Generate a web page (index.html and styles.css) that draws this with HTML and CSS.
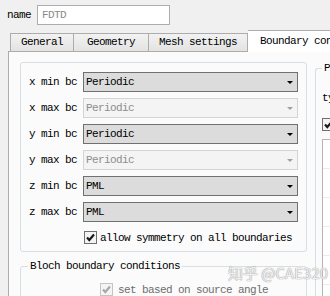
FILE: index.html
```html
<!DOCTYPE html>
<html lang="en">
<head>
  <meta charset="UTF-8">
  <title>FDTD - Boundary conditions</title>
  <link rel="stylesheet" href="styles.css">
</head>
<body>
  <div class="top">
    <span class="name-lbl">name</span>
    <div class="field">FDTD</div>
  </div>

  <div class="tabs">
    <div class="tab">General</div>
    <div class="tab tab-geo">Geometry</div>
    <div class="tab">Mesh settings</div>
    <div class="tab active">Boundary conditions</div>
  </div>

  <div class="pane">
    <div class="col">
      <fieldset class="grp bc">
        <div class="row"><span class="rl">x min bc</span><div class="combo">Periodic<i class="arr"></i></div></div>
        <div class="row"><span class="rl">x max bc</span><div class="combo off">Periodic<i class="arr"></i></div></div>
        <div class="row"><span class="rl">y min bc</span><div class="combo">Periodic<i class="arr"></i></div></div>
        <div class="row"><span class="rl">y max bc</span><div class="combo off">Periodic<i class="arr"></i></div></div>
        <div class="row"><span class="rl">z min bc</span><div class="combo">PML<i class="arr"></i></div></div>
        <div class="row"><span class="rl">z max bc</span><div class="combo">PML<i class="arr"></i></div></div>
        <div class="chk sym">
          <svg class="box" width="13" height="13" viewBox="0 0 13 13">
            <rect x="0.5" y="0.5" width="12" height="12" fill="#f4f4f4" stroke="#6f6f6f"/>
            <path d="M3 6.5 L5.3 9 L10 3.5" fill="none" stroke="#1a1a1a" stroke-width="2.2"/>
          </svg>
          <span>allow symmetry on all boundaries</span>
        </div>
      </fieldset>

      <fieldset class="grp bloch">
        <legend>Bloch boundary conditions</legend>
        <div class="chk dis">
          <svg class="box" width="13" height="13" viewBox="0 0 13 13">
            <rect x="0.5" y="0.5" width="12" height="12" fill="#f4f4f4" stroke="#c4c4c4"/>
            <path d="M3 6.5 L5.3 9 L10 3.5" fill="none" stroke="#a8a8a8" stroke-width="2.2"/>
          </svg>
          <span>set based on source angle</span>
        </div>
      </fieldset>
    </div>

    <fieldset class="grp side">
      <legend>PML settings</legend>
      <div class="side-line">type</div>
      <div class="side-chk">
        <svg class="box" width="13" height="13" viewBox="0 0 13 13">
          <rect x="0.5" y="0.5" width="12" height="12" fill="#f4f4f4" stroke="#6f6f6f"/>
          <path d="M3 6.5 L5.3 9 L10 3.5" fill="none" stroke="#1a1a1a" stroke-width="2.2"/>
        </svg>
      </div>
      <div class="table">
        <div class="trow"></div>
        <div class="trow"></div>
        <div class="trow"></div>
        <div class="trow"></div>
        <div class="trow"></div>
      </div>
    </fieldset>
  </div>

  <div class="mark">知乎 @CAE320</div>
</body>
</html>
```

FILE: styles.css
```css
body {
  margin: 0;
  width: 330px;
  height: 296px;
  overflow: hidden;
  background-color: #f0f0f0;
  font-family: "Liberation Mono", "DejaVu Sans Mono", monospace;
  font-size: 11px;
  letter-spacing: -0.6px;
  color: #000;
  position: relative;
}

/* name field */
.top {
  display: flex;
  align-items: center;
  padding: 5px 0 0 7px;
  height: 20px;
}

.name-lbl {
  width: 30px;
}

.field {
  width: 127px;
  height: 18px;
  line-height: 18px;
  border: 1px solid #abadb3;
  background: #fff;
  color: #8a8a8a;
  padding-left: 4px;
}

/* tabs */
.tabs {
  display: flex;
  align-items: flex-end;
  margin-top: 6px;
  padding-left: 10px;
  height: 20px;
  position: relative;
  z-index: 2;
  white-space: nowrap;
}

.tab {
  flex-shrink: 0;
  height: 17px;
  line-height: 17px;
  padding: 0 10px;
  border: 1px solid #acacac;
  border-bottom: none;
  border-left: none;
  background: linear-gradient(#f2f2f2, #e3e3e3);
}

.tab:first-child {
  border-left: 1px solid #acacac;
}

.tab-geo {
  padding: 0 13px;
}

.tab.active {
  height: 21px;
  line-height: 20px;
  padding: 0 12px;
  margin-bottom: -1px;
  background: #fff;
}

/* tab page */
.pane {
  display: flex;
  gap: 8px;
  margin-left: 8px;
  border-left: 1px solid #acacac;
  border-top: 1px solid #acacac;
  background: #fbfbfb;
  padding: 10px 0 0 11px;
  height: 240px;
}

.col {
  display: flex;
  flex-direction: column;
  width: 287px;
  flex-shrink: 0;
}

.grp {
  margin: 0;
  border: 1px solid #d5dfe5;
  border-radius: 3px;
  min-width: 0;
}

.grp legend {
  padding: 0 2px;
  line-height: 12px;
  white-space: nowrap;
}

.bc {
  display: flex;
  flex-direction: column;
  gap: 6px;
  padding: 9px 8px 7px 8px;
}

.row {
  display: flex;
  align-items: center;
}

.rl {
  width: 54px;
  flex-shrink: 0;
}

.combo {
  flex: 1;
  height: 18px;
  line-height: 18px;
  border: 1px solid #707070;
  background: #dcdcdc;
  padding-left: 2px;
  position: relative;
}

.combo.off {
  border-color: #d4d4d4;
  background: #f4f4f4;
  color: #8d8d8d;
}

.arr {
  position: absolute;
  right: 4px;
  top: 8px;
  width: 0;
  height: 0;
  border-left: 3px solid transparent;
  border-right: 3px solid transparent;
  border-top: 3px solid #000;
}

.combo.off .arr {
  border-top-color: #a0a0a0;
}

.chk {
  display: flex;
  align-items: center;
  gap: 3px;
  height: 13px;
  white-space: nowrap;
}

.sym {
  margin: 3px 0 0 55px;
}

.box {
  display: block;
  flex-shrink: 0;
}

.bloch {
  margin-top: 8px;
  padding: 11px 0 10px 7px;
}

.chk.dis {
  margin-left: 72px;
  gap: 5px;
  color: #6d6d6d;
}

/* right group, mostly cut off */
.side {
  flex: 1;
  padding: 0 0 0 6px;
  border-right: none;
  border-bottom: none;
  white-space: nowrap;
}

.side-line {
  margin-top: 18px;
  height: 12px;
  line-height: 12px;
}

.side-chk {
  margin-top: 14px;
}

.table {
  margin-top: 8px;
  height: 160px;
  border: 1px solid #b5b5b5;
  border-right: none;
  background: #fff;
  display: flex;
  flex-direction: column;
}

.trow {
  height: 28px;
  border-bottom: 1px solid #ececec;
}

/* watermark overlay */
.mark {
  position: absolute;
  left: 228px;
  top: 262px;
  font-family: "Noto Sans CJK SC", "Noto Sans", sans-serif;
  font-size: 15px;
  letter-spacing: 0;
  color: rgba(255, 255, 255, 0.85);
  text-shadow: 0 0 1px #9a9a9a, 0 0 1px #9a9a9a;
}
```
